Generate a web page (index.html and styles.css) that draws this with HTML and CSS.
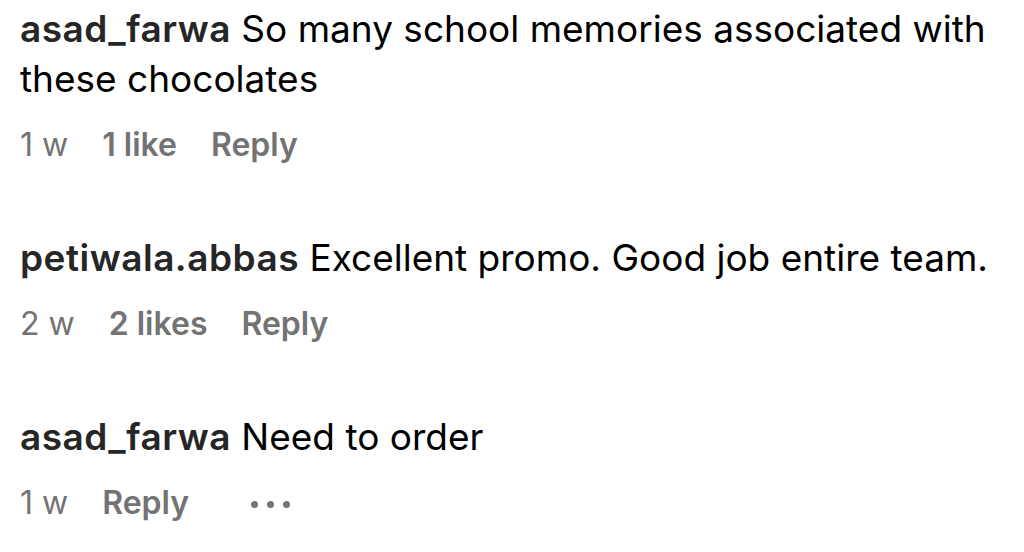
FILE: index.html
```html
<!DOCTYPE html>
<html lang="en">
<head>
  <meta charset="UTF-8" />
  <title>Comments</title>
  <link rel="stylesheet" href="styles.css">
</head>
<body>
  <div class="comments">
    <div class="comment">
      <p class="text"><span class="user">asad_farwa</span> So many school memories associated with these chocolates</p>
      <div class="meta">
        <span class="time">1 w</span>
        <span class="action">1 like</span>
        <span class="action">Reply</span>
      </div>
    </div>

    <div class="comment">
      <p class="text"><span class="user">petiwala.abbas</span> Excellent promo. Good job entire team.</p>
      <div class="meta">
        <span class="time">2 w</span>
        <span class="action">2 likes</span>
        <span class="action">Reply</span>
      </div>
    </div>

    <div class="comment">
      <p class="text"><span class="user">asad_farwa</span> Need to order</p>
      <div class="meta">
        <span class="time">1 w</span>
        <span class="action">Reply</span>
        <span class="more"><i></i><i></i><i></i></span>
      </div>
    </div>
  </div>
</body>
</html>
```

FILE: styles.css
```css
body {
  margin: 0;
  background-color: #fff;
  font-family: Inter, "Liberation Sans", sans-serif;
  color: #000;
}

.comments {
  display: flex;
  flex-direction: column;
  gap: 68px;
  padding: 4px 10px 0 20px;
}

.comment {
  display: flex;
  flex-direction: column;
  gap: 21px;
}

.text {
  margin: 0;
  font-size: 37px;
  line-height: 50px;
}

.user {
  font-weight: 600;
  letter-spacing: 0.5px;
  color: #262626;
}

.meta {
  display: flex;
  align-items: center;
  gap: 34px;
  font-size: 32px;
  line-height: 40px;
  color: #737373;
}

.action {
  font-weight: 600;
}

.more {
  display: flex;
  gap: 9px;
  margin-left: 28px;
  padding-top: 3px;
}

.more i {
  width: 7px;
  height: 7px;
  border-radius: 50%;
  background-color: #737373;
}
```
